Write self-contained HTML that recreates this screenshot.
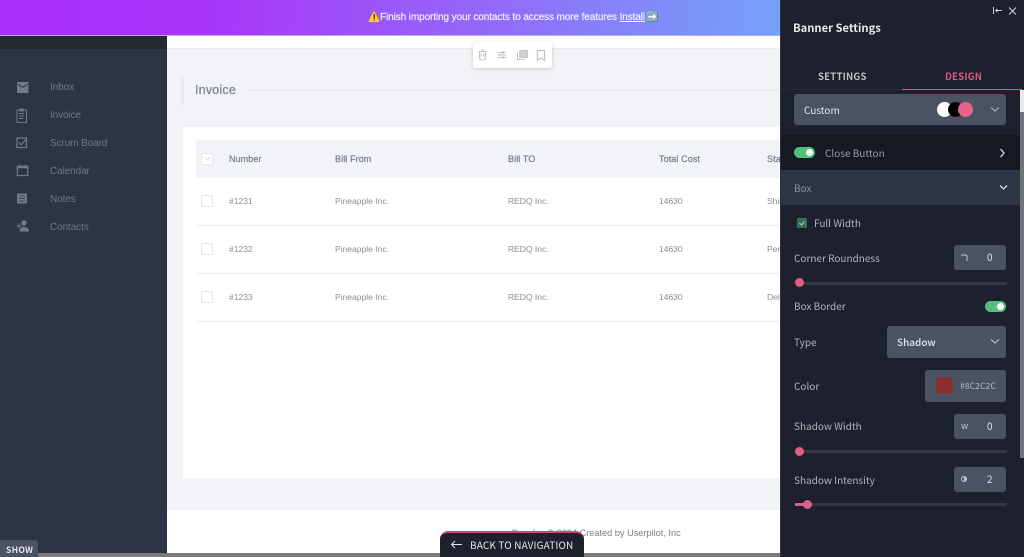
<!DOCTYPE html>
<html><head><meta charset="utf-8"><style>
html,body{margin:0;padding:0;width:1024px;height:557px;overflow:hidden;background:#f1f3f6}
body{filter:blur(.3px)}
*{box-sizing:border-box}
.a{position:absolute}
.t{position:absolute;white-space:nowrap;font-family:"Liberation Sans",sans-serif;line-height:14px}
.p{position:absolute;white-space:nowrap;font-family:"Noto Sans CJK JP","Liberation Sans",sans-serif;line-height:16px;color:#b0b4bb;font-size:10px}
.nav{color:#70778a;font-size:10px;letter-spacing:-.1px;margin-top:1px}
.th{color:#767c90;font-size:9px;letter-spacing:.1px;-webkit-text-stroke:.2px #767c90}
.td{color:#8c8c91;font-size:8.5px}
.cb{position:absolute;width:12px;height:12px;left:201px;background:#fff;border:1px solid #e4e5e8;border-radius:2px}
.line{position:absolute;left:196px;width:584px;height:1px;background:#e9ebef}
.box{position:absolute;background:#4a5264;border-radius:3px}
.track{position:absolute;left:795px;width:212px;height:3px;background:#333844;border-radius:2px}
.dot{position:absolute;width:9px;height:9px;border-radius:50%;background:#dd5f89}
svg{position:absolute;overflow:visible}
</style></head><body>
<div class="a" style="left:0;top:0;width:1024px;height:36px;background:linear-gradient(92deg,#a92ff8 0%,#a835f8 20%,#9564f8 45%,#7f8df9 65%,#70a8fb 80%,#70a8fb 100%);border-bottom:1px solid #b9a9f5"></div>
<div class="t" style="left:368px;top:11px;font-size:10px">⚠️</div>
<div class="t" style="left:380px;top:11px;font-size:10px;color:#f4f5fe;letter-spacing:-.1px;-webkit-text-stroke:.15px #f4f5fe">Finish importing your contacts to access more features <u>Install</u></div>
<div class="t" style="left:646px;top:11px;font-size:10px">➡️</div>

<div class="a" style="left:0;top:36px;width:167px;height:521px;background:#2d3446"></div>
<div class="a" style="left:0;top:36px;width:167px;height:13px;background:#232833"></div>
<div class="a" style="left:167px;top:36px;width:613px;height:13px;background:#fff;border-bottom:1px solid #e9ebef"></div>

<svg style="left:0;top:0" width="40" height="240" fill="#737a8c">
<path d="M17 82h11.500v11h-11.500z"/><path d="M17.500 84l5.300 3.300 5.300-3.300" fill="none" stroke="#2d3446" stroke-width="1"/>
<g fill="none" stroke="#737a8c" stroke-width="1"><path d="M17 110h9.500v12.500h-9.500z"/><path d="M19 113.500h5M19 116h5M19 118.500h4"/><path d="M20 109h3v2h-3z" fill="#737a8c"/>
<path d="M17 138h9.500v9.500h-9.500z" stroke-width="1.200"/><path d="M19 142.500l2.200 2.300 5-5.500" stroke-width="1.200"/>
<path d="M17.300 166.500h10.500v9h-10.500z" stroke-width="1.200"/><path d="M17.300 167h10.500" stroke-width="2.500"/><path d="M19.500 164.500v2M25.500 164.500v2"/></g>
<path d="M17 193.500h10v10h-10z"/><path d="M19 196h6M19 198.500h6M19 201h6" stroke="#2d3446" stroke-width=".7"/>
<circle cx="24" cy="223" r="2.700"/><path d="M19.500 231.500c0-3 2.200-4.500 4.500-4.500s5 1.500 5 4.500z"/><path d="M16.500 226h5M19 223.500v5" stroke="#737a8c" stroke-width="1"/>
</svg>
<div class="t nav" style="left:50px;top:80px">Inbox</div>
<div class="t nav" style="left:50px;top:108px">Invoice</div>
<div class="t nav" style="left:50px;top:136px">Scrum Board</div>
<div class="t nav" style="left:50px;top:164px">Calendar</div>
<div class="t nav" style="left:50px;top:192px">Notes</div>
<div class="t nav" style="left:50px;top:220px">Contacts</div>

<div class="a" style="left:181px;top:77px;width:3px;height:28px;background:#e6e8ec"></div>
<div class="t" style="left:195px;top:83px;font-size:12.500px;color:#7d8497;letter-spacing:.2px;-webkit-text-stroke:.25px #7d8497">Invoice</div>
<div class="a" style="left:248px;top:90px;width:532px;height:1px;background:#e6e8ec"></div>

<div class="a" style="left:182px;top:126px;width:598px;height:353px;background:#fff;border:1px solid #f3f4f6;border-right:0"></div>
<div class="a" style="left:196px;top:140px;width:584px;height:38px;background:#f1f3f6"></div>
<div class="cb" style="top:153px;border-color:#e8e9ec"></div>
<svg style="left:204px;top:156px" width="8" height="6"><path d="M1 1l2.500 3 2.500-3" fill="none" stroke="#d5d7dc" stroke-width=".8"/></svg>
<div class="t th" style="left:229px;top:152px">Number</div>
<div class="t th" style="left:335px;top:152px">Bill From</div>
<div class="t th" style="left:508px;top:152px">Bill TO</div>
<div class="t th" style="left:659px;top:152px">Total Cost</div>
<div class="t th" style="left:767px;top:152px;width:13px;overflow:hidden">Status</div>

<div class="cb" style="top:195px"></div>
<div class="t td" style="left:229px;top:194px">#1231</div>
<div class="t td" style="left:335px;top:194px">Pineapple Inc.</div>
<div class="t td" style="left:508px;top:194px">REDQ Inc.</div>
<div class="t td" style="left:659px;top:194px">14630</div>
<div class="t td" style="left:767px;top:194px;width:13px;overflow:hidden">Shipped</div>
<div class="line" style="top:225px"></div>
<div class="cb" style="top:243px"></div>
<div class="t td" style="left:229px;top:242px">#1232</div>
<div class="t td" style="left:335px;top:242px">Pineapple Inc.</div>
<div class="t td" style="left:508px;top:242px">REDQ Inc.</div>
<div class="t td" style="left:659px;top:242px">14630</div>
<div class="t td" style="left:767px;top:242px;width:13px;overflow:hidden">Pending</div>
<div class="line" style="top:273px"></div>
<div class="cb" style="top:291px"></div>
<div class="t td" style="left:229px;top:290px">#1233</div>
<div class="t td" style="left:335px;top:290px">Pineapple Inc.</div>
<div class="t td" style="left:508px;top:290px">REDQ Inc.</div>
<div class="t td" style="left:659px;top:290px">14630</div>
<div class="t td" style="left:767px;top:290px;width:13px;overflow:hidden">Delivered</div>
<div class="line" style="top:321px"></div>

<div class="a" style="left:473px;top:42px;width:79px;height:26px;background:#fff;border-radius:3px;box-shadow:0 1px 4px rgba(0,0,0,.18)"></div>
<svg style="left:473px;top:42px" width="79" height="26" fill="none" stroke="#bfc2c9" stroke-width="1.100">
<path d="M5.500 9.500h8M6.500 9.500v6c0 1.500 1 2.500 3 2.500s3-1 3-2.500v-6M8 8h3"/><path d="M8.200 12v2.500M10.800 12v2.500"/>
<path d="M25 10.500h8M25 13h8M25 15.500h8"/><path d="M30 9v3M27 11.500v3M30 14v3"/>
<path d="M44.500 10.500v7h7.500"/><path d="M46.800 8.500h7.700v7h-7.700z" fill="#ced1d6"/>
<path d="M64.500 8.500h7v10l-3.500-2.500-3.500 2.500z" stroke-width="1.300"/>
</svg>

<div class="a" style="left:167px;top:509px;width:613px;height:44px;background:#fff;border-top:1px solid #eceef1"></div>
<div class="t" style="left:511px;top:526px;font-size:9.2px;color:#7d7d7d">Copyfox © 2024 Created by Userpilot, Inc</div>
<div class="a" style="left:0;top:553px;width:780px;height:4px;background:#7b7b7b"></div>
<div class="a" style="left:0;top:540px;width:38px;height:17px;background:#4a5264;border-radius:2px 3px 0 0"></div>
<div class="t" style="left:6px;top:543px;font-size:8.500px;font-weight:bold;color:#e2e4e8;font-family:'Noto Sans CJK JP','Liberation Sans',sans-serif;letter-spacing:.3px">SHOW</div>
<div class="a" style="left:440px;top:531px;width:144px;height:26px;background:#1c212d;border-top:2px solid #c84a76;border-radius:8px 8px 0 0"></div>
<svg style="left:450px;top:538px" width="14" height="12" fill="none" stroke="#e6e7ea" stroke-width="1"><path d="M12 6.500H1.500M5 3L1.500 6.500 5 10"/></svg>
<div class="t" style="left:470px;top:538px;font-size:10px;color:#e6e7ea;letter-spacing:.15px;font-family:'Noto Sans CJK JP','Liberation Sans',sans-serif">BACK TO NAVIGATION</div>

<div class="a" style="left:780px;top:0;width:244px;height:557px;background:#1c212d;border-left:1px solid #2c3242"></div>
<svg style="left:990px;top:4px" width="30" height="14" fill="none" stroke="#cfd1d6" stroke-width="1"><path d="M3.500 3v7M5.500 6.500h6.500M5.500 6.500l2-1.500M5.500 6.500l2 1.500"/><path d="M19 3.500l7 7M26 3.500l-7 7" stroke-width="1.100"/></svg>
<div class="p" style="left:793px;top:20px;font-size:11.200px;font-weight:bold;color:#e8e9eb">Banner Settings</div>
<div class="p" style="left:818px;top:68px;font-size:9.600px;font-weight:bold;color:#bcbfc5;letter-spacing:.2px">SETTINGS</div>
<div class="p" style="left:945px;top:68px;font-size:9.600px;font-weight:bold;color:#d95884;letter-spacing:.2px">DESIGN</div>
<div class="a" style="left:781px;top:89px;width:243px;height:1px;background:#30354180"></div>
<div class="a" style="left:902px;top:89px;width:120px;height:1px;background:#d95884"></div>
<div class="a" style="left:1020px;top:90px;width:4px;height:368px;background:#6f7278"></div>
<div class="a" style="left:1020px;top:90px;width:4px;height:22px;background:#e9e9e9"></div>

<div class="box" style="left:794px;top:94px;width:212px;height:31px"></div>
<div class="p" style="left:804px;top:102px;color:#e2e4e8">Custom</div>
<div class="a" style="left:937px;top:102px;width:15px;height:15px;border-radius:50%;background:#fff"></div>
<div class="a" style="left:948px;top:102px;width:15px;height:15px;border-radius:50%;background:#000"></div>
<div class="a" style="left:958px;top:102px;width:15px;height:15px;border-radius:50%;background:#e8628c"></div>
<svg style="left:990px;top:106px" width="12" height="8" fill="none" stroke="#aeb2ba" stroke-width="1.100"><path d="M1 1.500l4 3.500 4-3.500"/></svg>

<div class="a" style="left:781px;top:135px;width:239px;height:35px;background:#151923"></div>
<div class="a" style="left:794px;top:147px;width:21px;height:11px;border-radius:6px;background:#53bf7b"><i style="position:absolute;right:2px;top:2px;width:7px;height:7px;background:#fff;border-radius:50%"></i></div>
<div class="p" style="left:825px;top:145px;color:#9a9da4">Close Button</div>
<svg style="left:999px;top:148px" width="8" height="10" fill="none" stroke="#d8dade" stroke-width="1.300"><path d="M1.500 1l3.500 4-3.500 4"/></svg>

<div class="a" style="left:781px;top:170px;width:239px;height:35px;background:#2d3446"></div>
<div class="p" style="left:794px;top:180px;color:#8e929b">Box</div>
<svg style="left:999px;top:184px" width="10" height="8" fill="none" stroke="#d8dade" stroke-width="1.300"><path d="M1 1.500l3.500 3.500 3.500-3.500"/></svg>

<div class="a" style="left:797px;top:218px;width:10px;height:10px;background:#3f6b5c;border-radius:1px"></div>
<svg style="left:797px;top:218px" width="10" height="10" fill="none" stroke="#7fe0a0" stroke-width="1.100"><path d="M2.500 5l2 2 3-3.500"/></svg>
<div class="p" style="left:814px;top:215px">Full Width</div>

<div class="p" style="left:794px;top:250px">Corner Roundness</div>
<div class="box" style="left:954px;top:245px;width:52px;height:25px"></div>
<svg style="left:960px;top:254px" width="10" height="9" fill="none" stroke="#c5c8ce" stroke-width="1"><path d="M1 1h4.500c1 0 1.500 .5 1.500 1.500V7"/></svg>
<div class="p" style="left:987px;top:249px;color:#e2e4e8">0</div>
<div class="track" style="top:282px"></div>
<div class="dot" style="left:795px;top:278px"></div>

<div class="p" style="left:794px;top:298px">Box Border</div>
<div class="a" style="left:985px;top:301px;width:21px;height:11px;border-radius:6px;background:#53bf7b"><i style="position:absolute;right:2px;top:2px;width:7px;height:7px;background:#fff;border-radius:50%"></i></div>

<div class="p" style="left:794px;top:334px">Type</div>
<div class="box" style="left:887px;top:326px;width:119px;height:32px"></div>
<div class="p" style="left:897px;top:334px;color:#e2e4e8;font-weight:500">Shadow</div>
<svg style="left:990px;top:338px" width="12" height="8" fill="none" stroke="#c5c8ce" stroke-width="1.100"><path d="M1 1.500l4 3.500 4-3.500"/></svg>

<div class="p" style="left:794px;top:378px">Color</div>
<div class="box" style="left:925px;top:370px;width:81px;height:32px"></div>
<div class="a" style="left:936px;top:377px;width:17px;height:17px;background:#8c2c2c;border-radius:3px;border:1px solid #7a3a3a"></div>
<div class="p" style="left:960px;top:378px;font-size:8.500px;color:#b6b9c0;letter-spacing:.1px">#8C2C2C</div>

<div class="p" style="left:794px;top:418px">Shadow Width</div>
<div class="box" style="left:954px;top:414px;width:52px;height:25px"></div>
<div class="p" style="left:961px;top:418px;font-size:9px;color:#c5c8ce">w</div>
<div class="p" style="left:987px;top:418px;color:#e2e4e8">0</div>
<div class="track" style="top:450px"></div>
<div class="dot" style="left:795px;top:447px"></div>

<div class="p" style="left:794px;top:472px">Shadow Intensity</div>
<div class="box" style="left:954px;top:467px;width:52px;height:25px"></div>
<div class="a" style="left:961px;top:476px;width:6px;height:6px;border-radius:50%;background:linear-gradient(90deg,#4a5264 50%,#c5c8ce 50%);border:1px solid #c5c8ce"></div>
<div class="p" style="left:987px;top:471px;color:#e2e4e8">2</div>
<div class="track" style="top:503px"></div>
<div class="a" style="left:795px;top:503px;width:10px;height:3px;background:#dd5f89"></div>
<div class="dot" style="left:803px;top:500px"></div>
</body></html>
